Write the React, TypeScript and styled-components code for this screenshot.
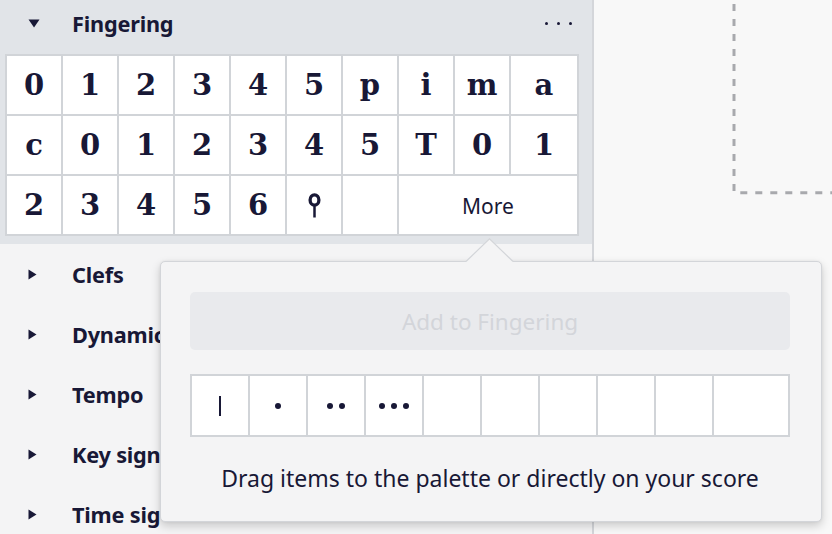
import React from "react";
import styled, { createGlobalStyle } from "styled-components";

const Global = createGlobalStyle`
  html, body { margin: 0; padding: 0; background: #f8f8f8; }
  body { font-family: "Noto Sans", "DejaVu Sans", sans-serif; color: #181836; }
  * { box-sizing: border-box; }
`;

const INK = "#181836";
const LINE = "#d1d4d8";

const Root = styled.div`
  position: relative;
  width: 832px;
  height: 534px;
  display: flex;
  overflow: hidden;
  background: #f8f8f8;
`;

const Panel = styled.div`
  width: 594px;
  flex: none;
  display: flex;
  flex-direction: column;
  background: #f4f4f5;
  border-right: 2px solid #d4d6da;
`;

const Section = styled.div`
  flex: none;
  background: #e1e4e8;
  padding: 0 13px 8px 5px;
`;

const SectionHeader = styled.div`
  height: 54px;
  display: flex;
  align-items: center;
  padding-bottom: 8px;
`;

const CaretBox = styled.div`
  width: 67px;
  padding-left: 23px;
  display: flex;
  align-items: center;
`;

const Title = styled.div`
  flex: 1;
  font-size: 21.7px;
  font-weight: 700;
  color: ${INK};
  letter-spacing: -0.2px;
  white-space: nowrap;
`;

const RowTitle = styled(Title)`
  flex: none;
  max-width: 88px;
  overflow: hidden;
`;

const Dots = styled.div`
  display: flex;
  gap: 9px;
  margin-right: 7px;
`;

const Dot = styled.span<{ $size?: number }>`
  display: block;
  width: ${(p) => p.$size ?? 3}px;
  height: ${(p) => p.$size ?? 3}px;
  border-radius: 50%;
  background: ${INK};
`;

const Grid = styled.div<{ $cell: number; $rows: number; $rowH: number }>`
  display: grid;
  grid-template-columns: repeat(9, ${(p) => p.$cell}px) 1fr;
  grid-template-rows: repeat(${(p) => p.$rows}, ${(p) => p.$rowH}px);
  gap: 2px;
  padding: 2px;
  background: ${LINE};
`;

const Cell = styled.div<{ $span?: number }>`
  background: #ffffff;
  display: flex;
  align-items: center;
  justify-content: center;
  grid-column: span ${(p) => p.$span ?? 1};
  font-family: "DejaVu Serif", "Liberation Serif", serif;
  font-weight: 700;
  font-size: 29px;
  color: ${INK};
  line-height: 1;
  padding-top: 1px;
`;

const MoreCell = styled(Cell)`
  font-family: "Noto Sans", sans-serif;
  font-weight: 400;
  font-size: 21px;
  padding-top: 2px;
`;

const Row = styled.div`
  flex: none;
  height: 60px;
  display: flex;
  align-items: center;
  padding-left: 5px;
`;

const Canvas = styled.div`
  flex: 1;
  position: relative;
  background: #f8f8f8;
`;

const PageOutline = styled.svg`
  display: block;
  width: 100%;
  height: 100%;
`;

const Popover = styled.div`
  position: absolute;
  left: 160px;
  top: 261px;
  width: 662px;
  height: 261px;
  background: #f4f4f5;
  border: 1px solid #d3d5d9;
  border-radius: 5px;
  box-shadow: 0 4px 10px rgba(0, 0, 0, 0.18), 0 0 3px rgba(0, 0, 0, 0.06);
  padding: 30px 31px 0 29px;
  display: flex;
  flex-direction: column;
`;

const Arrow = styled.svg`
  position: absolute;
  top: -24px;
  left: 305px;
  width: 47px;
  height: 25px;
  overflow: visible;
`;

const AddButton = styled.button`
  height: 58px;
  border: none;
  border-radius: 5px;
  background: #e9eaed;
  color: #d3d5da;
  font-family: "Noto Sans", sans-serif;
  font-size: 22.5px;
  cursor: default;
  margin-bottom: 24px;
`;

const Hint = styled.div`
  margin-top: 25px;
  text-align: center;
  font-size: 23px;
  color: ${INK};
  white-space: nowrap;
`;

const Bar = styled.span`
  display: block;
  width: 2px;
  height: 20px;
  background: ${INK};
`;

const DotGroup = styled.div`
  display: flex;
  gap: 6px;
`;

function CaretDown() {
  return (
    <svg width="12" height="9" viewBox="0 0 12 9">
      <polygon points="0.5,0.5 11.5,0.5 6,8.5" fill={INK} />
    </svg>
  );
}

function CaretRight() {
  return (
    <svg width="9" height="11" viewBox="0 0 9 11">
      <polygon points="0.5,0.5 8.5,5.5 0.5,10.5" fill={INK} />
    </svg>
  );
}

function Thumb() {
  return (
    <svg width="15" height="26" viewBox="0 0 15 26">
      <ellipse cx="7.5" cy="7" rx="4.4" ry="5.2" fill="none" stroke={INK} strokeWidth="3.3" />
      <line x1="7.5" y1="11.5" x2="7.5" y2="24.5" stroke={INK} strokeWidth="2.5" />
    </svg>
  );
}

const fingering: string[] = [
  "0", "1", "2", "3", "4", "5", "p", "i", "m", "a",
  "c", "0", "1", "2", "3", "4", "5", "T", "0", "1",
  "2", "3", "4", "5", "6",
];

const sections = ["Clefs", "Dynamics", "Tempo", "Key signatures", "Time signatures"];

function DotRun({ n }: { n: number }) {
  return (
    <DotGroup>
      {Array.from({ length: n }).map((_, i) => (
        <Dot key={i} $size={6} />
      ))}
    </DotGroup>
  );
}

export default function App() {
  return (
    <>
      <Global />
      <Root>
        <Panel>
          <Section>
            <SectionHeader>
              <CaretBox>
                <CaretDown />
              </CaretBox>
              <Title>Fingering</Title>
              <Dots>
                <Dot />
                <Dot />
                <Dot />
              </Dots>
            </SectionHeader>
            <Grid $cell={54} $rows={3} $rowH={58}>
              {fingering.map((g, i) => (
                <Cell key={i}>{g}</Cell>
              ))}
              <Cell>
                <Thumb />
              </Cell>
              <Cell />
              <MoreCell $span={3}>More</MoreCell>
            </Grid>
          </Section>
          {sections.map((s) => (
            <Row key={s}>
              <CaretBox>
                <CaretRight />
              </CaretBox>
              <RowTitle title={s}>{s}</RowTitle>
            </Row>
          ))}
        </Panel>
        <Canvas>
          <PageOutline viewBox="0 0 236 534" preserveAspectRatio="xMinYMin meet">
            <path
              d="M140 4 V192.7 H240"
              fill="none"
              stroke="#a8a9ad"
              strokeWidth="3"
              strokeDasharray="7 8"
            />
          </PageOutline>
        </Canvas>
        <Popover>
          <Arrow viewBox="0 0 47 25">
            <polygon points="0,23 23.5,0.8 47,23 47,25 0,25" fill="#f4f4f5" />
            <polyline points="0,23.5 23.5,0.8 47,23.5" fill="none" stroke="#d3d5d9" strokeWidth="1.2" />
          </Arrow>
          <AddButton disabled>Add to Fingering</AddButton>
          <Grid $cell={56} $rows={1} $rowH={59}>
            <Cell>
              <Bar />
            </Cell>
            <Cell>
              <DotRun n={1} />
            </Cell>
            <Cell>
              <DotRun n={2} />
            </Cell>
            <Cell>
              <DotRun n={3} />
            </Cell>
            {Array.from({ length: 6 }).map((_, i) => (
              <Cell key={i} />
            ))}
          </Grid>
          <Hint>Drag items to the palette or directly on your score</Hint>
        </Popover>
      </Root>
    </>
  );
}
